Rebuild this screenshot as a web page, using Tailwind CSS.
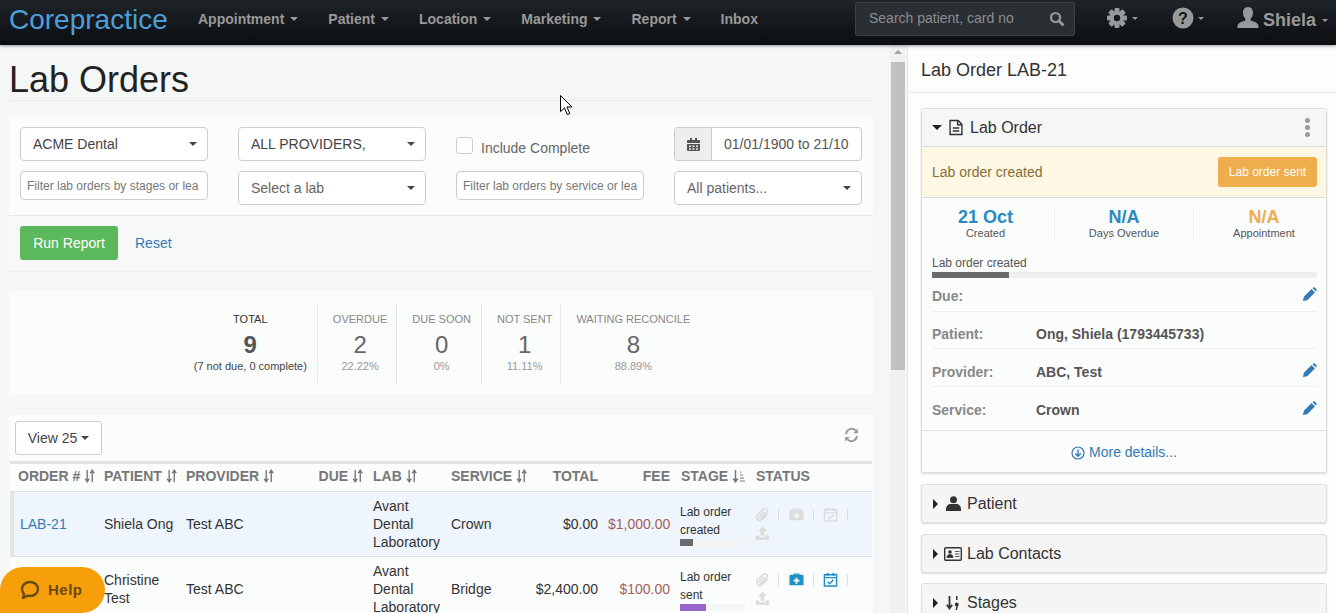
<!doctype html>
<html lang="en">
<head>
<meta charset="utf-8">
<title>Lab Orders</title>
<script src="https://cdn.jsdelivr.net/npm/@tailwindcss/browser@4"></script>
</head>
<body class="relative h-[613px] w-[1336px] overflow-hidden bg-[#f5f6f6] font-['Liberation_Sans',Arial,sans-serif] text-[14px] text-[#333]">

<svg class="hidden">
  <symbol id="sort" viewBox="0 0 12 15"><path d="M3.500 1v12M1.300 10.500 3.500 13.800 5.700 10.500M9 14V2M6.800 4.500 9 1.200 11.200 4.500" fill="none" stroke="currentColor" stroke-width="1.500"/></symbol>
  <symbol id="pencil" viewBox="0 0 16 16"><path d="M1 15l1-4.600 8.200-8.200 3.600 3.600L5.600 14zM11.200 1.200l.8-.6c.5-.4 1.100-.4 1.500 0l1.900 1.900c.4.4.4 1 0 1.500l-.6.8z" fill="currentColor"/></symbol>
  <symbol id="clip" viewBox="0 0 16 16"><path d="M13.500 7.500 8 13c-1.600 1.600-4 1.600-5.300.2-1.300-1.300-1.200-3.600.3-5l5.600-5.600c1-1 2.600-1 3.600 0s1 2.500 0 3.500L7 11.300c-.5.500-1.200.5-1.700 0s-.5-1.100 0-1.600l4.500-4.500" fill="none" stroke="currentColor" stroke-width="1.700"/></symbol>
  <symbol id="case" viewBox="0 0 16 16"><path d="M5 3V1.500h6V3h3a1.500 1.500 0 0 1 1.500 1.500V14H.5V4.500A1.500 1.500 0 0 1 2 3zm1.300 0h3.400V2.700H6.300zM7 6v2.200H4.800v2H7v2.200h2v-2.200h2.200v-2H9V6z" fill="currentColor" fill-rule="evenodd"/></symbol>
  <symbol id="calcheck" viewBox="0 0 16 16"><path d="M1.500 3h13v12h-13zM1.500 6h13" fill="none" stroke="currentColor" stroke-width="1.500"/><path d="M4 1h2v3H4zM10 1h2v3h-2z" fill="currentColor"/><path d="M5 10.300 7.200 12.500 11 8.300" fill="none" stroke="currentColor" stroke-width="1.400"/></symbol>
  <symbol id="upload" viewBox="0 0 16 16"><path d="M8 .5 12.500 5.500H10v5H6v-5H3.500zM1 10h3.500v2h7v-2H15v5H1z" fill="currentColor"/></symbol>
</svg>

<!-- top nav -->
<header class="flex h-[45px] items-center bg-gradient-to-b from-[#1e2429] to-[#0b0e11] shadow-[0_1px_3px_rgba(0,0,0,.4)] relative z-10">
  <a class="ml-[9px] w-[174px] text-[28px] text-[#4c9fd9] leading-[38px] -mt-[6px]">Corepractice</a>
  <nav class="flex items-center font-bold text-[#999] -mt-[7px]">
    <a class="flex items-center gap-[6px] px-[15px]">Appointment <span class="inline-block border-x-[4px] border-t-[4px] border-x-transparent border-t-[#999]"></span></a>
    <a class="flex items-center gap-[6px] px-[15px]">Patient <span class="inline-block border-x-[4px] border-t-[4px] border-x-transparent border-t-[#999]"></span></a>
    <a class="flex items-center gap-[6px] px-[15px]">Location <span class="inline-block border-x-[4px] border-t-[4px] border-x-transparent border-t-[#999]"></span></a>
    <a class="flex items-center gap-[6px] px-[15px]">Marketing <span class="inline-block border-x-[4px] border-t-[4px] border-x-transparent border-t-[#999]"></span></a>
    <a class="flex items-center gap-[6px] px-[15px]">Report <span class="inline-block border-x-[4px] border-t-[4px] border-x-transparent border-t-[#999]"></span></a>
    <a class="px-[15px]">Inbox</a>
  </nav>
  <div class="ml-auto mr-[31px] flex h-[34px] w-[220px] -mt-[8px] items-center justify-between rounded-[2px] border border-[#3c4145] bg-[#2a2f33] pl-[13px] pr-[9px] text-[#8a8d8f]">
    <span>Search patient, card no</span>
    <svg class="h-[16px] w-[16px]" viewBox="0 0 16 16"><circle cx="6.500" cy="6.500" r="4.500" fill="none" stroke="#999" stroke-width="2.200"/><path d="M10 10l4.500 4.500" stroke="#999" stroke-width="2.800"/></svg>
  </div>
  <div class="flex items-center text-[#999] -mt-[9px] mr-[8px]">
    <svg class="h-[22px] w-[22px]" viewBox="0 0 22 22"><g fill="#999"><rect x="8.500" y="1" width="5" height="20" rx="1"/><rect x="8.500" y="1" width="5" height="20" rx="1" transform="rotate(45 11 11)"/><rect x="8.500" y="1" width="5" height="20" rx="1" transform="rotate(90 11 11)"/><rect x="8.500" y="1" width="5" height="20" rx="1" transform="rotate(135 11 11)"/></g><circle cx="11" cy="11" r="7" fill="#999"/><circle cx="11" cy="11" r="3.200" fill="#14181c"/></svg>
    <span class="ml-[4px] inline-block border-x-[3px] border-t-[3px] border-x-transparent border-t-[#999]"></span>
    <svg class="ml-[34px] h-[22px] w-[22px]" viewBox="0 0 22 22"><circle cx="11" cy="11" r="10.500" fill="#999"/><text x="11" y="17" text-anchor="middle" font-size="16" font-weight="700" font-family="Liberation Sans" fill="#14181c">?</text></svg>
    <span class="ml-[4px] inline-block border-x-[3px] border-t-[3px] border-x-transparent border-t-[#999]"></span>
    <svg class="ml-[32px] h-[24px] w-[24px]" viewBox="0 0 24 24"><path d="M12 1c3.500 0 5 2.800 5 5.800 0 2.500-1 4.600-2.300 5.800v2c3 1 7.300 2 7.800 5.400v2H1.500v-2c.5-3.400 4.800-4.400 7.800-5.400v-2C8 11.400 7 9.300 7 6.800 7 3.800 8.500 1 12 1z" fill="#999"/></svg>
    <span class="ml-[3px] text-[18px] font-bold mt-[5px]">Shiela</span>
    <span class="ml-[6px] mt-[5px] inline-block border-x-[3px] border-t-[3px] border-x-transparent border-t-[#999]"></span>
  </div>
</header>

<main class="flex h-[568px]">
  <!-- left column -->
  <section class="w-[890px] shrink-0 overflow-hidden pl-[9px] pr-[17px]">
    <div class="border-b border-[#eaeaea] pt-[15px] h-[56px]">
      <h1 class="text-[36px] leading-[40px] text-[#222]">Lab Orders</h1>
    </div>

    <!-- filters -->
    <div class="mt-[15px] h-[156px] rounded-[2px] border-b border-[#eeeeee] bg-[#f7f8f8]">
      <div class="grid h-[100px] grid-cols-[188px_188px_188px_188px] gap-x-[30px] border-b border-[#e8e8e8] bg-[#fbfcfc] pl-[11px] pt-[11px]">
        <div class="flex flex-col gap-[10px]">
          <div class="flex h-[34px] items-center justify-between rounded-[4px] border border-[#ccc] bg-white pl-[12px] pr-[10px] text-[#444]">ACME Dental <span class="inline-block border-x-[4px] border-t-[4px] border-x-transparent border-t-[#444]"></span></div>
          <div class="flex h-[29px] items-center rounded-[4px] border border-[#ccc] bg-white pl-[6px] text-[12px] text-[#777] overflow-hidden whitespace-nowrap">Filter lab orders by stages or lea</div>
        </div>
        <div class="flex flex-col gap-[10px]">
          <div class="flex h-[34px] items-center justify-between rounded-[4px] border border-[#ccc] bg-white pl-[12px] pr-[10px] text-[#444]">ALL PROVIDERS, <span class="inline-block border-x-[4px] border-t-[4px] border-x-transparent border-t-[#444]"></span></div>
          <div class="flex h-[34px] items-center justify-between rounded-[4px] border border-[#ccc] bg-white pl-[12px] pr-[10px] text-[#666]">Select a lab <span class="inline-block border-x-[4px] border-t-[4px] border-x-transparent border-t-[#444]"></span></div>
        </div>
        <div class="flex flex-col gap-[10px]">
          <div class="flex h-[34px] items-center gap-[8px] text-[#666]"><span class="mt-[2px] h-[17px] w-[17px] rounded-[3px] border border-[#ccc] bg-white"></span><span class="mt-[8px]">Include Complete</span></div>
          <div class="flex h-[29px] items-center rounded-[4px] border border-[#ccc] bg-white pl-[6px] text-[12px] text-[#777] overflow-hidden whitespace-nowrap">Filter lab orders by service or lea</div>
        </div>
        <div class="flex flex-col gap-[10px]">
          <div class="flex h-[34px] overflow-hidden rounded-[4px] border border-[#ccc] bg-white text-[#555]">
            <span class="flex w-[37px] shrink-0 items-center justify-center border-r border-[#ccc] bg-[#eee]">
              <svg class="h-[13px] w-[13px]" viewBox="0 0 13 13"><path d="M3 0h2v2h3V0h2v2h2a1 1 0 0 1 1 1v2H0V3a1 1 0 0 1 1-1h2zM0 6h13v6a1 1 0 0 1-1 1H1a1 1 0 0 1-1-1zm2 1.500V9h2V7.500zm3.500 0V9h2V7.500zm3.500 0V9h2V7.500zM2 10.300v1.400h2v-1.400zm3.500 0v1.400h2v-1.400zm3.500 0v1.400h2v-1.400z" fill="#555" fill-rule="evenodd"/></svg>
            </span>
            <span class="flex items-center whitespace-nowrap pl-[12px]">01/01/1900 to 21/10</span>
          </div>
          <div class="flex h-[34px] items-center justify-between rounded-[4px] border border-[#ccc] bg-white pl-[12px] pr-[10px] text-[#666]">All patients... <span class="inline-block border-x-[4px] border-t-[4px] border-x-transparent border-t-[#444]"></span></div>
        </div>
      </div>
      <div class="flex items-center pl-[11px] pt-[10px]">
        <button class="h-[34px] w-[98px] rounded-[3px] bg-[#5cb85c] text-center text-white">Run Report</button>
        <a class="ml-[17px] text-[#337ab7]">Reset</a>
      </div>
    </div>

    <!-- stats -->
    <div class="mt-[19px] flex h-[104px] justify-center rounded-[3px] bg-[#fbfcfc] pr-[3px] pt-[12px] text-center">
      <div class="h-[81px] border-r border-[#e8e8e8] pl-[15px] pr-[10px]">
        <div class="mt-[9px] text-[11px] leading-[14px] text-[#333]">TOTAL</div>
        <div class="mt-[5px] text-[24px] font-bold leading-[28px] text-[#555]">9</div>
        <div class="text-[11px] leading-[14px] text-[#444]">(7 not due, 0 complete)</div>
      </div>
      <div class="h-[81px] border-r border-[#e8e8e8] pl-[15px] pr-[9px]">
        <div class="mt-[9px] text-[11px] leading-[14px] text-[#888]">OVERDUE</div>
        <div class="mt-[5px] text-[24px] leading-[28px] text-[#666]">2</div>
        <div class="text-[11px] leading-[14px] text-[#999]">22.22%</div>
      </div>
      <div class="h-[81px] border-r border-[#e8e8e8] pl-[15px] pr-[10px]">
        <div class="mt-[9px] text-[11px] leading-[14px] text-[#888]">DUE SOON</div>
        <div class="mt-[5px] text-[24px] leading-[28px] text-[#666]">0</div>
        <div class="text-[11px] leading-[14px] text-[#999]">0%</div>
      </div>
      <div class="h-[81px] border-r border-[#e8e8e8] pl-[15px] pr-[8px]">
        <div class="mt-[9px] text-[11px] leading-[14px] text-[#888]">NOT SENT</div>
        <div class="mt-[5px] text-[24px] leading-[28px] text-[#666]">1</div>
        <div class="text-[11px] leading-[14px] text-[#999]">11.11%</div>
      </div>
      <div class="h-[81px] pl-[15px] pr-[10px]">
        <div class="mt-[9px] text-[11px] leading-[14px] text-[#888]">WAITING RECONCILE</div>
        <div class="mt-[5px] text-[24px] leading-[28px] text-[#666]">8</div>
        <div class="text-[11px] leading-[14px] text-[#999]">88.89%</div>
      </div>
    </div>

    <!-- table -->
    <div class="mt-[20px] rounded-[3px] bg-[#fbfcfc] px-[1px] pt-[6px] pb-[20px]">
      <div class="flex h-[40px] items-start justify-between pl-[5px] pr-[13px]">
        <button class="flex h-[34px] w-[87px] items-center justify-center gap-[4px] rounded-[3px] border border-[#ccc] bg-white text-[#444]">View 25 <span class="inline-block border-x-[4px] border-t-[4px] border-x-transparent border-t-[#444]"></span></button>
        <svg class="mt-[6px] h-[16px] w-[15px]" viewBox="0 0 16 16"><path d="M2.200 7A6 6 0 0 1 12.500 3.300M13.800 9A6 6 0 0 1 3.500 12.700" fill="none" stroke="#999" stroke-width="2"/><path d="M14.800 1v5h-5zM1.200 15v-5h5z" fill="#999"/></svg>
      </div>
      <table class="w-[862px] table-fixed border-separate border-spacing-0 border-t-[3px] border-[#e3e3e3]">
        <colgroup>
          <col class="w-[89px]"><col class="w-[82px]"><col class="w-[134px]"><col class="w-[53px]"><col class="w-[78px]"><col class="w-[77px]"><col class="w-[80px]"><col class="w-[72px]"><col class="w-[75px]"><col class="w-[122px]">
        </colgroup>
        <thead class="text-[#777]">
          <tr class="h-[28px] whitespace-nowrap text-[14px] font-bold">
            <th class="border-b border-[#ddd] pb-[2px] pl-[8px] pr-0 text-left">ORDER # <svg class="inline h-[14px] w-[11px] align-[-2px]"><use href="#sort"/></svg></th>
            <th class="border-b border-[#ddd] pb-[2px] pl-[5px] text-left">PATIENT <svg class="inline h-[14px] w-[11px] align-[-2px]"><use href="#sort"/></svg></th>
            <th class="border-b border-[#ddd] pb-[2px] pl-[5px] text-left">PROVIDER <svg class="inline h-[14px] w-[11px] align-[-2px]"><use href="#sort"/></svg></th>
            <th class="border-b border-[#ddd] pb-[2px] pr-[5px] text-right">DUE <svg class="inline h-[14px] w-[11px] align-[-2px]"><use href="#sort"/></svg></th>
            <th class="border-b border-[#ddd] pb-[2px] pl-[5px] text-left">LAB <svg class="inline h-[14px] w-[11px] align-[-2px]"><use href="#sort"/></svg></th>
            <th class="border-b border-[#ddd] pb-[2px] pl-[5px] text-left">SERVICE <svg class="inline h-[14px] w-[11px] align-[-2px]"><use href="#sort"/></svg></th>
            <th class="border-b border-[#ddd] pb-[2px] pr-[5px] text-right">TOTAL</th>
            <th class="border-b border-[#ddd] pb-[2px] pr-[5px] text-right">FEE</th>
            <th class="border-b border-[#ddd] pb-[2px] pl-[6px] text-left">STAGE <svg class="inline h-[14px] w-[13px] align-[-2px]" viewBox="0 0 13 14"><path d="M3.500 1v11M1.300 9.500 3.500 12.800 5.700 9.500" fill="none" stroke="currentColor" stroke-width="1.500"/><path d="M8 3h1.500M8 6h3M8 9h4M8 12h5" stroke="currentColor"/></svg></th>
            <th class="border-b border-[#ddd] pb-[2px] pl-[6px] text-left">STATUS</th>
          </tr>
        </thead>
        <tbody class="leading-[18px]">
          <tr class="bg-[#eef5fc]">
            <td class="border-b border-l-[4px] border-b-[#ddd] border-l-[#e6e6e6] pl-[6px] text-[#337ab7]">LAB-21</td>
            <td class="border-b border-[#ddd] px-[5px] py-[5px]">Shiela Ong</td>
            <td class="border-b border-[#ddd] px-[5px]">Test ABC</td>
            <td class="border-b border-[#ddd]"></td>
            <td class="border-b border-[#ddd] px-[5px] py-[5px]">Avant Dental Laboratory</td>
            <td class="border-b border-[#ddd] px-[5px]">Crown</td>
            <td class="border-b border-[#ddd] px-[5px] text-right">$0.00</td>
            <td class="border-b border-[#ddd] px-[5px] text-right text-[#a5605a]">$1,000.00</td>
            <td class="border-b border-[#ddd] pl-[5px] pt-[2px] text-[12px]">Lab order created
              <div class="mb-[1px] h-[7px] w-[65px] bg-[#f5f5f5]"><div class="h-full w-[13px] bg-[#6b6b6b]"></div></div>
            </td>
            <td class="border-b border-[#ddd] pl-[5px] text-[#dcdcdc]">
              <div class="flex items-center"><svg class="h-[15px] w-[15px]"><use href="#clip"/></svg><span class="ml-[8px] h-[12px] w-[1px] bg-[#ddd]"></span><svg class="ml-[10px] h-[15px] w-[15px]"><use href="#case"/></svg><span class="ml-[9px] h-[12px] w-[1px] bg-[#ddd]"></span><svg class="ml-[9px] h-[15px] w-[15px]"><use href="#calcheck"/></svg><span class="ml-[9px] h-[12px] w-[1px] bg-[#ddd]"></span></div>
              <svg class="mt-[4px] h-[15px] w-[15px]"><use href="#upload"/></svg>
            </td>
          </tr>
          <tr>
            <td class="border-b border-l-[4px] border-b-[#ddd] border-l-[#fbfcfc] pl-[6px]"></td>
            <td class="border-b border-[#ddd] px-[5px] py-[5px]">Christine Test</td>
            <td class="border-b border-[#ddd] px-[5px]">Test ABC</td>
            <td class="border-b border-[#ddd]"></td>
            <td class="border-b border-[#ddd] px-[5px] py-[5px]">Avant Dental Laboratory</td>
            <td class="border-b border-[#ddd] px-[5px]">Bridge</td>
            <td class="border-b border-[#ddd] px-[5px] text-right">$2,400.00</td>
            <td class="border-b border-[#ddd] px-[5px] text-right text-[#a5605a]">$100.00</td>
            <td class="border-b border-[#ddd] pl-[5px] pt-[2px] text-[12px]">Lab order sent
              <div class="mb-[1px] h-[7px] w-[65px] bg-[#f5f5f5]"><div class="h-full w-[26px] bg-[#9966cc]"></div></div>
            </td>
            <td class="border-b border-[#ddd] pl-[5px] text-[#dcdcdc]">
              <div class="flex items-center"><svg class="h-[15px] w-[15px]"><use href="#clip"/></svg><span class="ml-[8px] h-[12px] w-[1px] bg-[#ddd]"></span><svg class="ml-[10px] h-[15px] w-[15px] text-[#1f8fc7]"><use href="#case"/></svg><span class="ml-[9px] h-[12px] w-[1px] bg-[#ddd]"></span><svg class="ml-[9px] h-[15px] w-[15px] text-[#1f8fc7]"><use href="#calcheck"/></svg><span class="ml-[9px] h-[12px] w-[1px] bg-[#ddd]"></span></div>
              <svg class="mt-[4px] h-[15px] w-[15px]"><use href="#upload"/></svg>
            </td>
          </tr>
        </tbody>
      </table>
    </div>
  </section>

  <!-- page scrollbar -->
  <div class="flex w-[15px] shrink-0 flex-col items-center bg-[#f0f0f0]">
    <span class="mt-[5px] inline-block border-x-[4px] border-b-[4px] border-x-transparent border-b-[#a3a3a3]"></span>
    <div class="mt-[8px] h-[308px] w-[14px] bg-[#c1c1c1]"></div>
  </div>

  <!-- right panel -->
  <aside class="ml-[2px] flex-1 overflow-hidden border-l border-[#e5e5e5] bg-[#fdfdfd]">
    <div class="flex h-[48px] items-center border-b border-[#e6e6e6] pl-[13px] pt-[4px] text-[18px] text-[#333]">Lab Order LAB-21</div>

    <div class="ml-[13px] mr-[9px] mt-[15px] rounded-[3px] border border-[#ddd] bg-[#fbfcfc] shadow-[0_1px_2px_rgba(0,0,0,.15)]">
      <div class="flex h-[38px] items-center border-b border-[#ddd] bg-[#f5f6f6] pl-[10px] pr-[16px] text-[16px] text-[#333]">
        <span class="inline-block border-x-[5px] border-t-[5px] border-x-transparent border-t-[#222]"></span>
        <svg class="ml-[7px] h-[17px] w-[14px]" viewBox="0 0 13 15"><path d="M1 1h7.500L12 4.500V14H1zM8 1v4h4M3.500 8h6M3.500 10.800h6" fill="none" stroke="#333" stroke-width="1.300"/></svg>
        <span class="ml-[7px]">Lab Order</span>
        <span class="ml-auto flex flex-col gap-[2px]"><i class="h-[5px] w-[5px] rounded-full bg-[#999]"></i><i class="h-[5px] w-[5px] rounded-full bg-[#999]"></i><i class="h-[5px] w-[5px] rounded-full bg-[#999]"></i></span>
      </div>
      <div class="flex h-[51px] items-center justify-between border-b border-[#ddd] bg-[#fcf8e3] pl-[10px] pr-[9px] text-[#8a6d3b]">
        Lab order created
        <button class="h-[30px] w-[99px] rounded-[3px] bg-[#f0ad4e] text-[12px] text-white">Lab order sent</button>
      </div>
      <div class="flex pt-[9px] text-center">
        <div class="h-[34px] w-[133px] border-r border-[#eee] pr-[5px]"><div class="text-[18px] font-bold leading-[20px] text-[#2a8bc0]">21 Oct</div><div class="text-[11px] leading-[12px] text-[#555]">Created</div></div>
        <div class="h-[34px] w-[139px] border-r border-[#eee]"><div class="text-[18px] font-bold leading-[20px] text-[#2a8bc0]">N/A</div><div class="text-[11px] leading-[12px] text-[#555]">Days Overdue</div></div>
        <div class="h-[34px] flex-1 pl-[8px]"><div class="text-[18px] font-bold leading-[20px] text-[#f0ad4e]">N/A</div><div class="text-[11px] leading-[12px] text-[#555]">Appointment</div></div>
      </div>
      <div class="pl-[10px] pr-[9px] pt-[14px]">
        <div class="text-[12px] leading-[17px] text-[#555]">Lab order created</div>
        <div class="h-[6px] bg-[#eee]"><div class="h-full w-[77px] bg-[#6b6b6b]"></div></div>
      </div>
      <div class="pl-[10px] pr-[9px] text-[14px] font-bold">
        <div class="flex h-[34px] items-center border-b border-[#eee] pt-[4px] text-[#888]">Due:<svg class="ml-auto -mt-[4px] h-[15px] w-[15px] text-[#337ab7]"><use href="#pencil"/></svg></div>
        <div class="flex h-[37px] items-center border-b border-[#eee] pt-[8px]"><span class="w-[104px] text-[#888]">Patient:</span><span class="text-[#555]">Ong, Shiela (1793445733)</span></div>
        <div class="flex h-[38px] items-center border-b border-[#eee] pt-[10px]"><span class="w-[104px] text-[#888]">Provider:</span><span class="text-[#555]">ABC, Test</span><svg class="ml-auto -mt-[4px] h-[15px] w-[15px] text-[#337ab7]"><use href="#pencil"/></svg></div>
        <div class="flex h-[43px] items-center pt-[4px]"><span class="w-[104px] text-[#888]">Service:</span><span class="text-[#555]">Crown</span><svg class="ml-auto -mt-[4px] h-[15px] w-[15px] text-[#337ab7]"><use href="#pencil"/></svg></div>
      </div>
      <div class="flex h-[42px] items-center justify-center gap-[4px] border-t border-[#e3e3e3] pt-[2px] text-[#337ab7]">
        <svg class="h-[14px] w-[14px]" viewBox="0 0 14 14"><circle cx="7" cy="7" r="6" fill="none" stroke="#337ab7" stroke-width="1.200"/><path d="M7 3.500v6.500M4.200 7.500 7 10.300 9.800 7.500" fill="none" stroke="#337ab7" stroke-width="1.400"/></svg>
        More details...
      </div>
    </div>

    <div class="ml-[13px] mr-[9px] mt-[11px] flex h-[39px] items-center rounded-[3px] border border-[#ddd] bg-[#f5f5f5] pl-[11px] text-[16px] shadow-[0_1px_2px_rgba(0,0,0,.12)]">
      <span class="inline-block border-y-[5px] border-l-[5px] border-y-transparent border-l-[#222]"></span>
      <svg class="ml-[8px] h-[15px] w-[15px]" viewBox="0 0 15 15"><circle cx="7.500" cy="3.800" r="3.500" fill="#333"/><path d="M0 15v-2c0-3 2.500-5 4.500-5h6c2 0 4.500 2 4.500 5v2z" fill="#333"/></svg>
      <span class="ml-[6px]">Patient</span>
    </div>
    <div class="ml-[13px] mr-[9px] mt-[11px] flex h-[39px] items-center rounded-[3px] border border-[#ddd] bg-[#f5f5f5] pl-[11px] text-[16px] shadow-[0_1px_2px_rgba(0,0,0,.12)]">
      <span class="inline-block border-y-[5px] border-l-[5px] border-y-transparent border-l-[#222]"></span>
      <svg class="ml-[6px] h-[14px] w-[18px]" viewBox="0 0 18 14"><rect x=".7" y=".7" width="16.600" height="12.600" rx="1" fill="none" stroke="#333" stroke-width="1.400"/><circle cx="6" cy="5" r="1.800" fill="#333"/><path d="M3 10.500c0-2 1.300-3 3-3s3 1 3 3zM11 4.500h4.500M11 7h4.500M11 9.500h4.500" fill="#333" stroke="#333" stroke-width=".8"/></svg>
      <span class="ml-[5px]">Lab Contacts</span>
    </div>
    <div class="ml-[13px] mr-[9px] mt-[10px] flex h-[39px] items-center rounded-[3px] border border-[#ddd] bg-[#f5f5f5] pl-[11px] text-[16px]">
      <span class="inline-block border-y-[5px] border-l-[5px] border-y-transparent border-l-[#222]"></span>
      <svg class="ml-[8px] h-[14px] w-[14px]" viewBox="0 0 14 14"><path d="M3.500 0v11M.8 8.800 3.500 12.500 6.200 8.800" fill="none" stroke="#333" stroke-width="1.800"/><path d="M10 0h1.500v4H10zM10.800 6.500a2 2 0 1 1-.1 4 2 2 0 0 1 .1-4zM12 10l-1 4h-1.500l1-4z" fill="#333"/></svg>
      <span class="ml-[7px]">Stages</span>
    </div>
  </aside>
</main>

<!-- help launcher -->
<div class="absolute bottom-0 left-0 z-20 flex h-[46px] w-[105px] items-center rounded-r-[23px] rounded-tl-[23px] bg-[#f79f0a] pl-[20px] text-[15px] font-bold tracking-[.5px] text-[#6b4a10]">
  <svg class="h-[20px] w-[20px]" viewBox="0 0 20 20"><path d="M10 2c4.500 0 8 3 8 7s-3.500 7-8 7c-.8 0-1.600-.1-2.300-.3L3 18l1-4c-1.300-1.300-2-3-2-5 0-4 3.500-7 8-7z" fill="none" stroke="#6b4a10" stroke-width="2.400" stroke-linejoin="round"/></svg>
  <span class="ml-[8px]">Help</span>
</div>

<!-- mouse pointer from the capture -->
<svg class="absolute left-[560px] top-[95px] z-20 h-[21px] w-[13px]" viewBox="0 0 13 21"><path d="M.5.500v16l4-3.500 2.800 6.500 2.500-1-2.800-6.500h5z" fill="#fff" stroke="#000"/></svg>

</body>
</html>
